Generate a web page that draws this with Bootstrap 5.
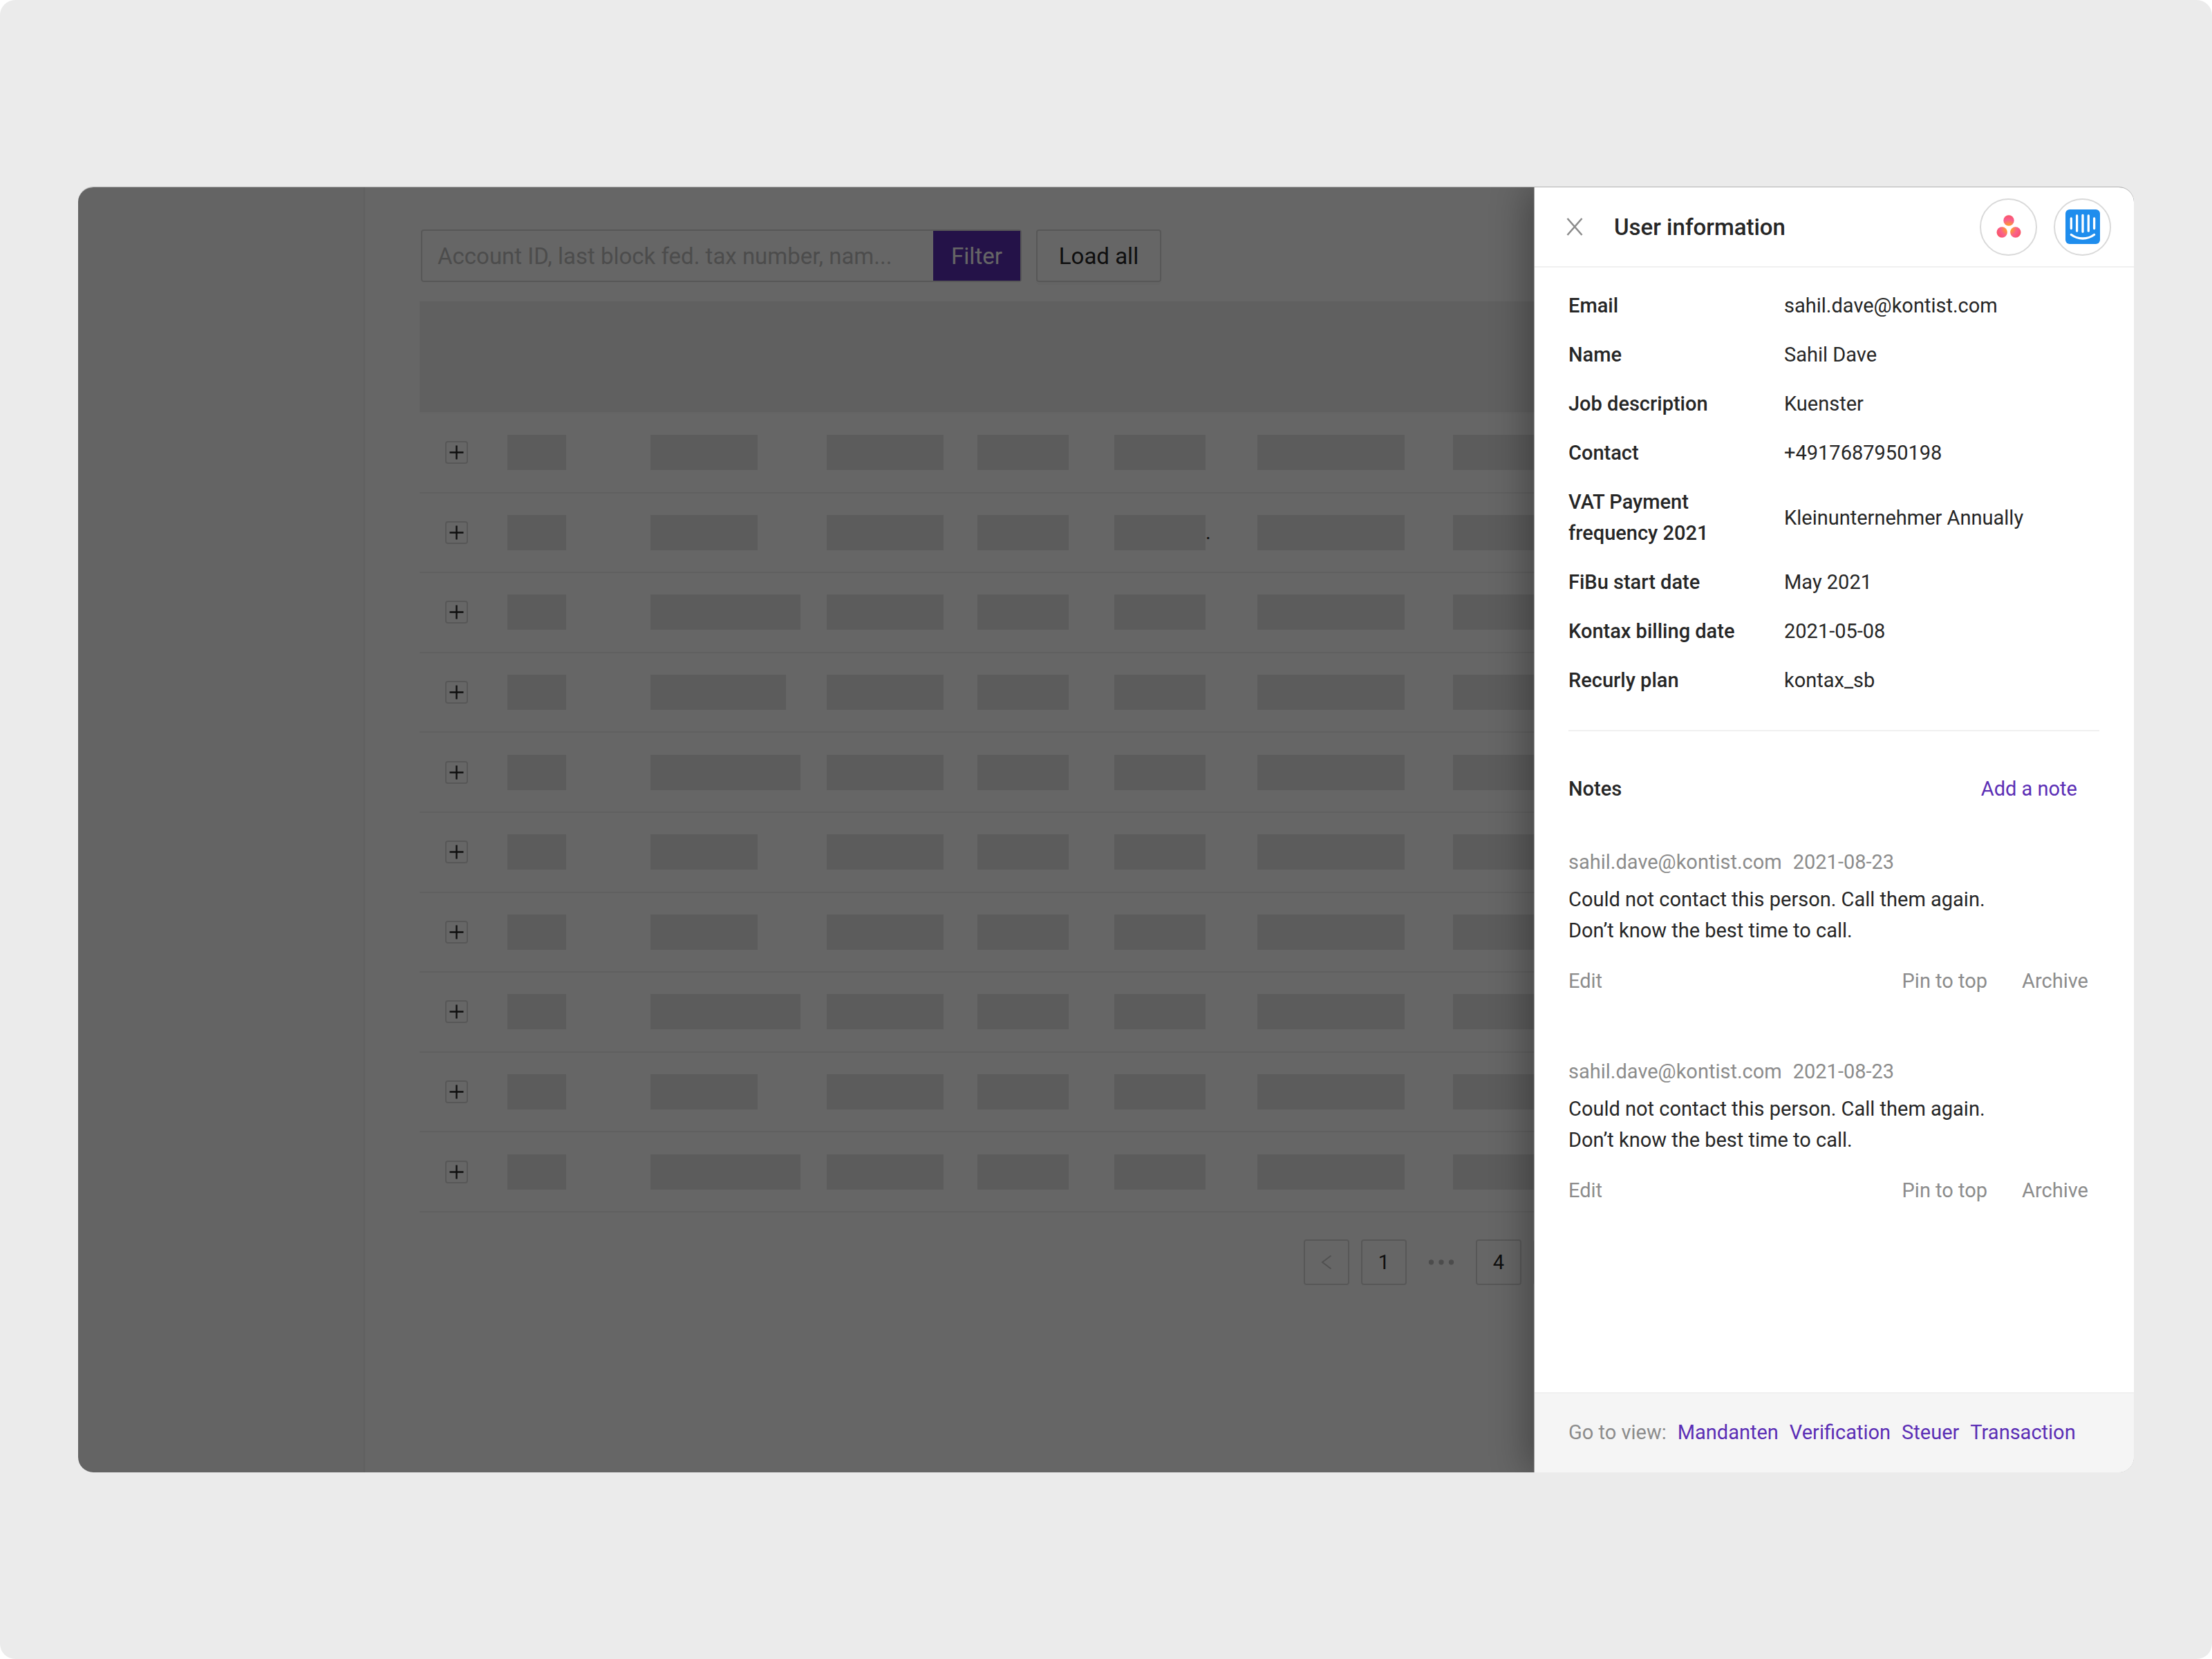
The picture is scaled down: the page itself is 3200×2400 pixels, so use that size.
<!DOCTYPE html>
<html lang="en">
<head>
<meta charset="utf-8">
<meta name="viewport" content="width=device-width, initial-scale=1">
<title>User information</title>
<link rel="stylesheet" href="https://cdn.jsdelivr.net/npm/bootstrap@5.3.0/dist/css/bootstrap.min.css">
<style>
  :root { --ink: #262626; --muted: #8c8c8c; --line: #f0f0f0; --edge: #d9d9d9; --brand: #5b2eb5; }
  body { font-family: Roboto, "Liberation Sans", sans-serif; font-size: 29px; line-height: 45px; color: var(--ink); background: #fff; }
  a { color: var(--brand); text-decoration: none; }
  button { color: inherit; background: none; border: 0; padding: 0; }
  .stage { min-height: 100vh; padding: 270px 113px; background: #ebebeb; border-radius: 22px; }
  .window { background: #fff; border-radius: 22px; border-top: 1px solid #b0b0b0; }
  .side { flex: 0 0 415px; background: #f9f9f9; border-right: 2px solid #efefef; }
  .content { padding: 61px 0 0 79px; min-width: 0; }
  .shade { inset: 0; background: rgba(0, 0, 0, .6); }

  .toolbar { gap: 21px; margin-bottom: 28px; padding-left: 2px; font-size: 33px; }
  .search { width: 869px; height: 76px; border: 2px solid var(--edge); border-radius: 4px; }
  .search input { min-width: 0; border: 0; padding: 0 22px; color: var(--ink); background: none; }
  .search input::placeholder { color: #bfbfbf; opacity: 1; }
  .search button { width: 126px; color: #fff; background: var(--brand); }
  .load { width: 181px; height: 76px; border: 2px solid var(--edge); border-radius: 4px; box-shadow: 0 4px 0 rgba(0, 0, 0, .02); }

  .accounts { table-layout: fixed; width: 100%; height: 1318px; border-collapse: separate; border-spacing: 0; }
  .accounts thead tr { height: 162px; }
  .accounts th { background: var(--line); background-clip: padding-box; border-bottom: 2px solid #fafafa; }
  .accounts td { padding: 0 0 0 22px; vertical-align: middle; border-bottom: 2px solid var(--line); }
  .accounts td:first-child { padding-left: 37px; }
  .expand { width: 33px; height: 33px; border: 2px solid var(--edge); border-radius: 4px; }
  .bone { height: 51px; background: #e5e5e5; }
  .b85 { width: 85px; } .b132 { width: 132px; } .b155 { width: 155px; } .b169 { width: 169px; }
  .b196 { width: 196px; } .b213 { width: 213px; } .b217 { width: 217px; }

  .pager { gap: 17px; margin: 39px 0 0 1279px; }
  .pager > * { flex: 0 0 66px; height: 66px; }
  .pager button { border: 2px solid var(--edge); border-radius: 4px; }

  .drawer { flex: 0 0 868px; background: #fff; border-left: 1px solid #a0a0a0; box-shadow: -12px 0 48px rgba(0, 0, 0, .3); z-index: 2; }
  .drawer-head { height: 116px; padding: 0 33px 0 46px; border-bottom: 2px solid var(--line); }
  .drawer-head h1 { font-size: 33px; font-weight: 500; line-height: 45px; margin-left: 45px; }
  .round { width: 83px; height: 83px; border: 2px solid var(--edge); border-radius: 50%; }
  .round + .round { margin-left: 24px; }
  .drawer-body { padding: 33px 50px 33px 49px; }
  .facts { display: grid; grid-template-columns: 312px 1fr; row-gap: 26px; align-items: center; margin: 0 0 49px; }
  .facts dt { font-weight: 500; padding-right: 40px; }
  .facts dd { margin: 0; }
  .rule { height: 2px; background: var(--line); margin-bottom: 61px; }
  .notes-head { padding-right: 32px; margin-bottom: 61px; }
  .notes-head h2 { font-size: 29px; font-weight: 500; line-height: 45px; }
  .note { margin-bottom: 86px; }
  .note-meta { gap: 16px; color: var(--muted); margin-bottom: 9px; }
  .note-text { margin-bottom: 28px; }
  .note-tools { color: var(--muted); gap: 50px; padding-right: 16px; }
  .drawer-foot { padding: 34px 49px 35px; gap: 16px; background: #f5f5f5; border-top: 2px solid var(--line); }
  .drawer-foot span { color: var(--muted); }
</style>
</head>
<body>
<svg class="d-none" aria-hidden="true">
  <symbol id="plus" viewBox="0 0 29 29"><path d="M14.500 4.500v20M4.500 14.500h20" stroke="#262626" stroke-width="2.400" fill="none"/></symbol>
</svg>
<div class="stage d-flex">
  <div class="window d-flex flex-fill position-relative overflow-hidden">
    <nav class="side" aria-label="Main"></nav>

    <main class="content flex-fill overflow-hidden">
      <form class="toolbar d-flex">
        <div class="search d-flex">
          <input class="flex-fill" type="text" aria-label="Search accounts" placeholder="Account ID, last block fed. tax number, nam...">
          <button type="button">Filter</button>
        </div>
        <button class="load" type="button">Load all</button>
      </form>

      <table class="accounts" aria-label="Accounts">
        <colgroup><col style="width:105px"><col style="width:207px"><col style="width:255px"><col style="width:218px"><col style="width:198px"><col style="width:207px"><col style="width:283px"><col></colgroup>
        <thead><tr><th></th><th></th><th></th><th></th><th></th><th></th><th></th><th></th></tr></thead>
        <tbody>
          <tr>
            <td><button class="expand d-block" type="button" aria-label="Expand row"><svg class="d-block" width="29" height="29"><use href="#plus"/></svg></button></td>
            <td><div class="bone b85"></div></td><td><div class="bone b155"></div></td><td><div class="bone b169"></div></td><td><div class="bone b132"></div></td><td><div class="bone b132"></div></td><td><div class="bone b213"></div></td><td><div class="bone"></div></td>
          </tr>
          <tr>
            <td><button class="expand d-block" type="button" aria-label="Expand row"><svg class="d-block" width="29" height="29"><use href="#plus"/></svg></button></td>
            <td><div class="bone b85"></div></td><td><div class="bone b155"></div></td><td><div class="bone b169"></div></td><td><div class="bone b132"></div></td><td><div class="d-flex align-items-center"><div class="bone b132"></div>.</div></td><td><div class="bone b213"></div></td><td><div class="bone"></div></td>
          </tr>
          <tr>
            <td><button class="expand d-block" type="button" aria-label="Expand row"><svg class="d-block" width="29" height="29"><use href="#plus"/></svg></button></td>
            <td><div class="bone b85"></div></td><td><div class="bone b217"></div></td><td><div class="bone b169"></div></td><td><div class="bone b132"></div></td><td><div class="bone b132"></div></td><td><div class="bone b213"></div></td><td><div class="bone"></div></td>
          </tr>
          <tr>
            <td><button class="expand d-block" type="button" aria-label="Expand row"><svg class="d-block" width="29" height="29"><use href="#plus"/></svg></button></td>
            <td><div class="bone b85"></div></td><td><div class="bone b196"></div></td><td><div class="bone b169"></div></td><td><div class="bone b132"></div></td><td><div class="bone b132"></div></td><td><div class="bone b213"></div></td><td><div class="bone"></div></td>
          </tr>
          <tr>
            <td><button class="expand d-block" type="button" aria-label="Expand row"><svg class="d-block" width="29" height="29"><use href="#plus"/></svg></button></td>
            <td><div class="bone b85"></div></td><td><div class="bone b217"></div></td><td><div class="bone b169"></div></td><td><div class="bone b132"></div></td><td><div class="bone b132"></div></td><td><div class="bone b213"></div></td><td><div class="bone"></div></td>
          </tr>
          <tr>
            <td><button class="expand d-block" type="button" aria-label="Expand row"><svg class="d-block" width="29" height="29"><use href="#plus"/></svg></button></td>
            <td><div class="bone b85"></div></td><td><div class="bone b155"></div></td><td><div class="bone b169"></div></td><td><div class="bone b132"></div></td><td><div class="bone b132"></div></td><td><div class="bone b213"></div></td><td><div class="bone"></div></td>
          </tr>
          <tr>
            <td><button class="expand d-block" type="button" aria-label="Expand row"><svg class="d-block" width="29" height="29"><use href="#plus"/></svg></button></td>
            <td><div class="bone b85"></div></td><td><div class="bone b155"></div></td><td><div class="bone b169"></div></td><td><div class="bone b132"></div></td><td><div class="bone b132"></div></td><td><div class="bone b213"></div></td><td><div class="bone"></div></td>
          </tr>
          <tr>
            <td><button class="expand d-block" type="button" aria-label="Expand row"><svg class="d-block" width="29" height="29"><use href="#plus"/></svg></button></td>
            <td><div class="bone b85"></div></td><td><div class="bone b217"></div></td><td><div class="bone b169"></div></td><td><div class="bone b132"></div></td><td><div class="bone b132"></div></td><td><div class="bone b213"></div></td><td><div class="bone"></div></td>
          </tr>
          <tr>
            <td><button class="expand d-block" type="button" aria-label="Expand row"><svg class="d-block" width="29" height="29"><use href="#plus"/></svg></button></td>
            <td><div class="bone b85"></div></td><td><div class="bone b155"></div></td><td><div class="bone b169"></div></td><td><div class="bone b132"></div></td><td><div class="bone b132"></div></td><td><div class="bone b213"></div></td><td><div class="bone"></div></td>
          </tr>
          <tr>
            <td><button class="expand d-block" type="button" aria-label="Expand row"><svg class="d-block" width="29" height="29"><use href="#plus"/></svg></button></td>
            <td><div class="bone b85"></div></td><td><div class="bone b217"></div></td><td><div class="bone b169"></div></td><td><div class="bone b132"></div></td><td><div class="bone b132"></div></td><td><div class="bone b213"></div></td><td><div class="bone"></div></td>
          </tr>
        </tbody>
      </table>

      <nav class="pager d-flex" aria-label="Pages">
        <button class="d-flex align-items-center justify-content-center" type="button" aria-label="Previous page"><svg width="16" height="22" viewBox="0 0 16 22"><path d="M14.500 1.500L2 11l12.500 9.500" fill="none" stroke="#c9c9c9" stroke-width="2"/></svg></button>
        <button type="button">1</button>
        <span class="d-flex align-items-center justify-content-center"><svg width="38" height="8" viewBox="0 0 38 8" fill="#bfbfbf"><circle cx="4.500" cy="4" r="3.700"/><circle cx="19" cy="4" r="3.700"/><circle cx="33.500" cy="4" r="3.700"/></svg></span>
        <button type="button">4</button>
        <button type="button" aria-label="Page 5"></button>
      </nav>
    </main>

    <div class="shade position-absolute"></div>

    <aside class="drawer d-flex flex-column">
      <header class="drawer-head d-flex align-items-center">
        <button type="button" aria-label="Close"><svg class="d-block" width="24" height="26" viewBox="0 0 24 26"><path d="M1.500 1l21 24M22.500 1l-21 24" stroke="#8c8c8c" stroke-width="2.600" fill="none"/></svg></button>
        <h1 class="mb-0 me-auto">User information</h1>
        <a class="round d-flex align-items-center justify-content-center" href="#" aria-label="Open in Asana">
          <svg width="36" height="34" viewBox="0 0 36 34">
            <defs><radialGradient id="warm" gradientUnits="userSpaceOnUse" cx="18" cy="19" r="21"><stop offset="0" stop-color="#ffb900"/><stop offset=".6" stop-color="#f95d8f"/><stop offset="1" stop-color="#f95353"/></radialGradient></defs>
            <g fill="url(#warm)"><circle cx="18" cy="8" r="7.700"/><circle cx="8.200" cy="25" r="7.700"/><circle cx="27.800" cy="25" r="7.700"/></g>
          </svg>
        </a>
        <a class="round d-flex align-items-center justify-content-center" href="#" aria-label="Open in Intercom">
          <svg width="50" height="50" viewBox="0 0 50 50">
            <rect width="50" height="50" rx="6" fill="#1f8ded"/>
            <path d="M8.300 13v14.500M16.600 9v22.200M25 8.300v24M33.300 9v22.200M41.600 13v14.500M8.300 36.500q7.500 5.500 16.700 5.500t16.600-5.500" fill="none" stroke="#fff" stroke-width="3.300" stroke-linecap="round"/>
          </svg>
        </a>
      </header>

      <div class="drawer-body flex-fill">
        <dl class="facts">
          <dt>Email</dt><dd>sahil.dave@kontist.com</dd>
          <dt>Name</dt><dd>Sahil Dave</dd>
          <dt>Job description</dt><dd>Kuenster</dd>
          <dt>Contact</dt><dd>+4917687950198</dd>
          <dt>VAT Payment frequency 2021</dt><dd>Kleinunternehmer Annually</dd>
          <dt>FiBu start date</dt><dd>May 2021</dd>
          <dt>Kontax billing date</dt><dd>2021-05-08</dd>
          <dt>Recurly plan</dt><dd>kontax_sb</dd>
        </dl>
        <div class="rule"></div>

        <div class="notes-head d-flex justify-content-between">
          <h2 class="mb-0">Notes</h2>
          <a href="#">Add a note</a>
        </div>
        <article class="note">
          <div class="note-meta d-flex"><span>sahil.dave@kontist.com</span><span>2021-08-23</span></div>
          <p class="note-text">Could not contact this person. Call them again.<br>Don’t know the best time to call.</p>
          <div class="note-tools d-flex"><button class="me-auto" type="button">Edit</button><button type="button">Pin to top</button><button type="button">Archive</button></div>
        </article>
        <article class="note mb-0">
          <div class="note-meta d-flex"><span>sahil.dave@kontist.com</span><span>2021-08-23</span></div>
          <p class="note-text">Could not contact this person. Call them again.<br>Don’t know the best time to call.</p>
          <div class="note-tools d-flex"><button class="me-auto" type="button">Edit</button><button type="button">Pin to top</button><button type="button">Archive</button></div>
        </article>
      </div>

      <footer class="drawer-foot d-flex">
        <span>Go to view:</span>
        <a href="#">Mandanten</a><a href="#">Verification</a><a href="#">Steuer</a><a href="#">Transaction</a>
      </footer>
    </aside>
  </div>
</div>
<script src="https://cdn.jsdelivr.net/npm/bootstrap@5.3.0/dist/js/bootstrap.bundle.min.js"></script>
</body>
</html>
